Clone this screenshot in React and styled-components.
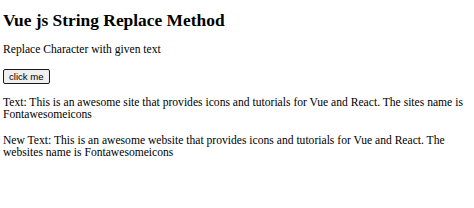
import styled, { createGlobalStyle } from 'styled-components';

const GlobalStyle = createGlobalStyle`
  body {
    margin: 0;
    background: #ffffff;
    color: #000000;
    font-family: "Liberation Serif", "Times New Roman", serif;
  }
`;

// Page wrapper, everything sits in a plain column.
const Page = styled.div`
  display: flex;
  flex-direction: column;
  align-items: flex-start;
  padding: 10px 3px 0 3px;
`;

const Title = styled.h2`
  margin: 0;
  font-size: 17.4px;
  line-height: 20px;
  font-weight: bold;
`;

const Text = styled.p`
  margin: ${({ $top }) => $top || '12.5px'} 0 0 0;
  font-size: 11.6px;
  line-height: 12.4px;
`;

const Button = styled.button`
  margin-top: 12.4px;
  height: 15.6px;
  padding: 0 5px;
  font-family: "Liberation Sans", Arial, sans-serif;
  font-size: 9.6px;
  line-height: 1;
  color: #000;
  background: #efefef;
  border: 1.5px solid #1a1a1a;
  border-radius: 2px;
`;

export default function App() {
  return (
    <>
      <GlobalStyle />
      <Page>
        <Title>Vue js String Replace Method</Title>
        <Text $top="14px">Replace Character with given text</Text>
        <Button>click me</Button>
        <Text $top="12.6px">
          Text: This is an awesome site that provides icons and tutorials for Vue and React. The sites name is
          Fontawesomeicons
        </Text>
        <Text $top="12.8px">
          New Text: This is an awesome website that provides icons and tutorials for Vue and React. The
          websites name is Fontawesomeicons
        </Text>
      </Page>
    </>
  );
}
